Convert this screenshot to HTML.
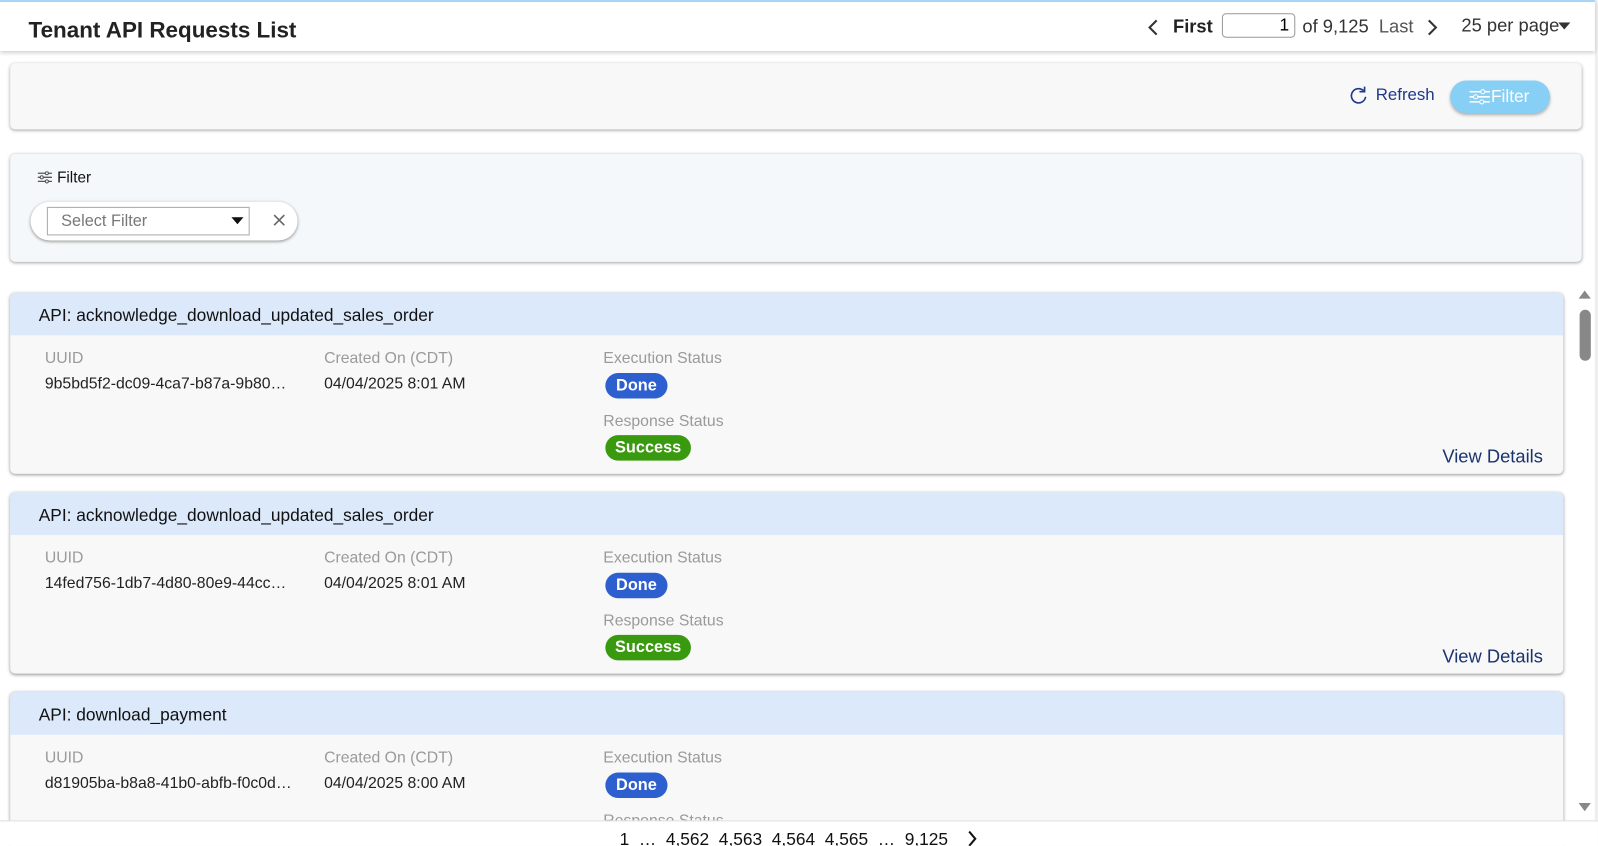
<!DOCTYPE html>
<html><head><meta charset="utf-8"><style>
*{box-sizing:border-box;margin:0;padding:0}
html,body{width:1598px;height:846px;overflow:hidden;background:#fff;font-family:"Liberation Sans",sans-serif}
#s{position:absolute;left:0;top:0;width:1568px;height:830px;transform:scale(1.0191);transform-origin:0 0;background:#fff;overflow:hidden}
.a{position:absolute}
.hdr{left:0;top:0;width:1565px;height:50px;background:#fff;border-top:2px solid #a9d3f5;box-shadow:0 2px 4px rgba(0,0,0,.18);z-index:2}
.card{position:absolute;left:10px;width:1542px;border-radius:5px;box-shadow:0 1px 3px rgba(0,0,0,.35)}
.lc{position:absolute;left:10px;width:1524px;height:178px;background:#f8f8f8;border-radius:5px;box-shadow:0 1px 3px rgba(0,0,0,.4);overflow:hidden}
.lh{height:42px;background:#dbe9fb;padding:13px 28px;font-size:17px;color:#111}
.lbl{position:absolute;font-size:15.5px;color:#9a9a9a}
.val{position:absolute;font-size:15.5px;color:#222}
.bd{position:absolute;height:25px;border-radius:13px;color:#fff;font-weight:bold;font-size:16px;line-height:25px;text-align:center}
.vd{position:absolute;right:20px;top:151px;font-size:18px;color:#1a3470}
</style></head><body><div id="s">
<div class="a hdr">
<div class="a" style="left:28px;top:15px;font-size:22px;font-weight:bold;color:#222">Tenant API Requests List</div>
<svg class="a" style="left:1125px;top:16px" width="14" height="18"><path d="M10 2 L3 9 L10 16" stroke="#333" stroke-width="2" fill="none"/></svg>
<div class="a" style="left:1151px;top:14px;font-size:18px;font-weight:bold;color:#222">First</div>
<div class="a" style="left:1199px;top:11px;width:72px;height:24px;border:1px solid #999;border-radius:4px;text-align:right;padding-right:5px;font-size:17px;line-height:22px">1</div>
<div class="a" style="left:1278px;top:14px;font-size:18px;color:#333">of 9,125</div>
<div class="a" style="left:1353px;top:14px;font-size:18px;color:#555">Last</div>
<svg class="a" style="left:1398px;top:16px" width="14" height="18"><path d="M4 2 L11 9 L4 16" stroke="#333" stroke-width="2" fill="none"/></svg>
<div class="a" style="left:1434px;top:13px;font-size:18px;color:#333">25 per page</div>
<svg class="a" style="left:1529px;top:20px" width="12" height="8"><path d="M0 0 L12 0 L6 7Z" fill="#333"/></svg>
</div>
<div class="a" style="left:1565px;top:0;width:3px;height:830px;background:#eee"></div>
<div class="card" style="top:62px;height:65px;background:#f8f8f8">
<svg class="a" style="left:1313px;top:22px" width="20" height="20"><path d="M15 5 A7 7 0 1 0 17 11" stroke="#1d3a8a" stroke-width="1.6" fill="none"/><path d="M16 1 L16 6 L11 6" stroke="#1d3a8a" stroke-width="1.6" fill="none"/></svg>
<div class="a" style="left:1340px;top:22px;font-size:16.5px;color:#1d3a8a">Refresh</div>
<div class="a" style="left:1413px;top:17px;width:98px;height:32px;border-radius:16px;background:#87cff5;box-shadow:0 2px 3px rgba(0,0,0,.3);color:#fff;font-size:17px;line-height:32px;padding-left:40px">Filter</div>
<svg class="a" style="left:1432px;top:25px" width="20" height="16"><path d="M0 3H20M0 8H20M0 13H20" stroke="#fff" stroke-width="1.5"/><circle cx="13" cy="3" r="2" fill="#87cff5" stroke="#fff"/><circle cx="6" cy="8" r="2" fill="#87cff5" stroke="#fff"/><circle cx="12" cy="13" r="2" fill="#87cff5" stroke="#fff"/></svg>
</div>
<div class="card" style="top:151px;height:106px;background:#f5f8fa">
<svg class="a" style="left:27px;top:17px" width="14" height="12"><path d="M0 2H14M0 6H14M0 10H14" stroke="#555" stroke-width="1.3"/><circle cx="9" cy="2" r="1.5" fill="#f5f8fa" stroke="#555"/><circle cx="4" cy="6" r="1.5" fill="#f5f8fa" stroke="#555"/><circle cx="9" cy="10" r="1.5" fill="#f5f8fa" stroke="#555"/></svg>
<div class="a" style="left:46px;top:15px;font-size:15px;color:#111">Filter</div>
<div class="a" style="left:20px;top:47px;width:262px;height:38px;border-radius:19px;background:#fff;box-shadow:0 1px 3px rgba(0,0,0,.45)"></div>
<div class="a" style="left:36px;top:52px;width:199px;height:28px;border:1px solid #aaa;font-size:16px;color:#777;padding:5px 13px">Select Filter</div>
<svg class="a" style="left:217px;top:62px" width="12" height="7"><path d="M0 0H12L6 7Z" fill="#111"/></svg>
<svg class="a" style="left:258px;top:59px" width="12" height="12"><path d="M1 1L11 11M11 1L1 11" stroke="#666" stroke-width="1.6"/></svg>
</div>

<div class="lc" style="top:287px"><div class="lh">API: acknowledge_download_updated_sales_order</div>
<div class="lbl" style="left:34px;top:56px">UUID</div><div class="val" style="left:34px;top:81px">9b5bd5f2-dc09-4ca7-b87a-9b80…</div>
<div class="lbl" style="left:308px;top:56px">Created On (CDT)</div><div class="val" style="left:308px;top:81px">04/04/2025 8:01 AM</div>
<div class="lbl" style="left:582px;top:56px">Execution Status</div><div class="bd" style="left:584px;top:79px;width:61px;background:#2d5fcf">Done</div>
<div class="lbl" style="left:582px;top:118px">Response Status</div><div class="bd" style="left:584px;top:140px;width:84px;background:#3a9a0f">Success</div>
<div class="vd">View Details</div></div>

<div class="lc" style="top:483px"><div class="lh">API: acknowledge_download_updated_sales_order</div>
<div class="lbl" style="left:34px;top:56px">UUID</div><div class="val" style="left:34px;top:81px">14fed756-1db7-4d80-80e9-44cc…</div>
<div class="lbl" style="left:308px;top:56px">Created On (CDT)</div><div class="val" style="left:308px;top:81px">04/04/2025 8:01 AM</div>
<div class="lbl" style="left:582px;top:56px">Execution Status</div><div class="bd" style="left:584px;top:79px;width:61px;background:#2d5fcf">Done</div>
<div class="lbl" style="left:582px;top:118px">Response Status</div><div class="bd" style="left:584px;top:140px;width:84px;background:#3a9a0f">Success</div>
<div class="vd">View Details</div></div>

<div class="lc" style="top:679px"><div class="lh">API: download_payment</div>
<div class="lbl" style="left:34px;top:56px">UUID</div><div class="val" style="left:34px;top:81px">d81905ba-b8a8-41b0-abfb-f0c0d…</div>
<div class="lbl" style="left:308px;top:56px">Created On (CDT)</div><div class="val" style="left:308px;top:81px">04/04/2025 8:00 AM</div>
<div class="lbl" style="left:582px;top:56px">Execution Status</div><div class="bd" style="left:584px;top:79px;width:61px;background:#2d5fcf">Done</div>
<div class="lbl" style="left:582px;top:118px">Response Status</div></div>

<svg class="a" style="left:1549px;top:284px" width="12" height="10"><path d="M0 9H12L6 1Z" fill="#888"/></svg>
<div class="a" style="left:1550px;top:304px;width:11px;height:50px;border-radius:6px;background:#888"></div>
<svg class="a" style="left:1549px;top:787px" width="12" height="10"><path d="M0 1H12L6 9Z" fill="#888"/></svg>

<div class="a" style="left:0;top:805px;width:1568px;height:60px;background:#fff;border-top:1px solid #ddd;font-size:17px;color:#111;z-index:3">
<div class="a" style="left:608px;top:8px;white-space:pre">1  …  4,562  4,563  4,564  4,565  …  9,125</div>
<svg class="a" style="left:948px;top:9px" width="12" height="16"><path d="M3 1L9 8L3 15" stroke="#111" stroke-width="2" fill="none"/></svg>
</div>
</div></body></html>
